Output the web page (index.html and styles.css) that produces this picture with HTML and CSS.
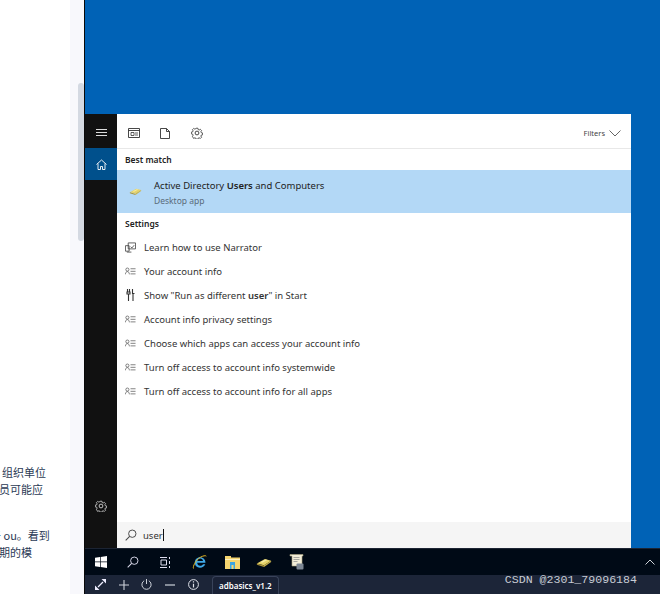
FILE: index.html
```html
<!DOCTYPE html>
<html lang="en">
<head>
<meta charset="utf-8">
<title>Search</title>
<link rel="stylesheet" href="styles.css">
</head>
<body>
<svg class="defs" width="0" height="0" aria-hidden="true">
  <symbol id="acct" viewBox="0 0 12 9">
    <circle cx="2.600" cy="2.400" r="1.700" fill="none" stroke="#555" stroke-width=".8"/>
    <path d="M.4 7.600c.2-2 1-3 2.200-3s2 1 2.200 3M6 1.500h5.500M6 4.300h5.500M6 7.100h5.500" fill="none" stroke="#555" stroke-width=".8"/>
  </symbol>
  <symbol id="gear" viewBox="0 0 12 12">
    <circle cx="6" cy="6" r="1.900" fill="none" stroke="currentColor" stroke-width=".9"/>
    <path d="M5 .7h2l.3 1.500 1.100.5 1.300-.8 1.400 1.400-.8 1.300.5 1.100 1.500.3v2l-1.500.3-.5 1.100.8 1.300-1.400 1.400-1.300-.8-1.100.5-.3 1.100H5l-.3-1.100-1.100-.5-1.300.8L.9 9.700l.8-1.300-.5-1.100L-.3 7V5l1.500-.3.500-1.100-.8-1.300L2.300.9l1.300.8 1.100-.5z" transform="translate(.6 .6) scale(.9)" fill="none" stroke="currentColor" stroke-width=".9"/>
  </symbol>
  <symbol id="book" viewBox="0 0 18 10">
    <path d="M1 6 10 1.200l7 1.800-8 5z" fill="#e6d36a"/>
    <path d="M1 6l8 2.500V10L1 7.500z" fill="#a89236"/>
    <path d="M9 8l8-5v1.300L9 10z" fill="#c9b24a"/>
    <path d="M5 4.500l6-2.800 2 .5-6 3z" fill="#f6eca8"/>
  </symbol>
  <symbol id="lens" viewBox="0 0 14 14">
    <circle cx="8.500" cy="5.500" r="4.300" fill="none" stroke="currentColor" stroke-width="1.100"/>
    <path d="M5.400 8.600.8 13.200" stroke="currentColor" stroke-width="1.200" fill="none"/>
  </symbol>
</svg>

<div class="screen">
  <aside class="doc">
    <div class="doc-page">
      <p class="line first">组织单位</p>
      <p class="line second">员可能应</p>
      <p class="line third">于 ou。看到</p>
      <p class="line fourth">期的模</p>
    </div>
    <div class="doc-gutter"><div class="doc-thumb"></div></div>
  </aside>

  <main class="vm">
    <div class="desktop">
      <section class="start">
        <nav class="rail">
          <div class="rail-btn menu">
            <svg width="11" height="8" viewBox="0 0 11 8"><path d="M0 .5h11M0 3.500h11M0 6.500h11" stroke="#ddd" stroke-width="1"/></svg>
          </div>
          <div class="rail-btn active">
            <svg width="11" height="11" viewBox="0 0 11 11"><path d="M.5 5.500 5.500 1l5 4.500M2 4.500v6h2.500V7.500h2v3H9v-6" fill="none" stroke="#fff" stroke-width=".9"/></svg>
          </div>
          <div class="rail-btn bottom">
            <svg class="rail-gear" width="12" height="12"><use href="#gear"/></svg>
          </div>
        </nav>
        <div class="pane">
          <header class="tabs">
            <svg width="12" height="10" viewBox="0 0 12 10"><path d="M.5.500h11v9H.5zM.5 2.500h11" fill="none" stroke="#333" stroke-width=".9"/><path d="M3 4.500h3v3H3zM7 5h3M7 7h3" fill="none" stroke="#333" stroke-width=".8"/></svg>
            <svg width="10" height="11" viewBox="0 0 10 11"><path d="M.5.500h6l3 3v7h-9zM6.500.500v3h3" fill="none" stroke="#333" stroke-width=".9"/></svg>
            <svg class="tab-gear" width="12" height="12"><use href="#gear"/></svg>
            <div class="filters"><span>Filters</span>
              <svg width="12" height="7" viewBox="0 0 12 7"><path d="M.5.500 6 6 11.500.500" fill="none" stroke="#555" stroke-width=".9"/></svg>
            </div>
          </header>
          <h2 class="heading best">Best match</h2>
          <div class="hit">
            <div class="hit-icon"><svg width="13" height="7"><use href="#book"/></svg></div>
            <div class="hit-text">
              <div class="hit-title">Active Directory <b>Users</b> and Computers</div>
              <div class="hit-sub">Desktop app</div>
            </div>
          </div>
          <h2 class="heading settings">Settings</h2>
          <ul class="list">
            <li class="row">
              <svg class="row-icon" width="12" height="11" viewBox="0 0 12 11"><path d="M3.500.500h8v6.500h-8zM.5 3.500h4v6h-4zM2 10.500h5M6 4.500l1.500 1.500 2.500-3" fill="none" stroke="#444" stroke-width=".9"/></svg>
              <span>Learn how to use Narrator</span></li>
            <li class="row"><svg class="row-icon" width="12" height="9"><use href="#acct"/></svg><span>Your account info</span></li>
            <li class="row">
              <svg class="row-icon" width="10" height="12" viewBox="0 0 10 12"><path d="M2 0v3M4 0v3M1.500 3h3v2h-3zM3 5v7M7 0v4.500h2M7.500 4.500V12" fill="none" stroke="#333" stroke-width="1.100"/></svg>
              <span>Show "Run as different <b>user</b>" in Start</span></li>
            <li class="row"><svg class="row-icon" width="12" height="9"><use href="#acct"/></svg><span>Account info privacy settings</span></li>
            <li class="row"><svg class="row-icon" width="12" height="9"><use href="#acct"/></svg><span>Choose which apps can access your account info</span></li>
            <li class="row"><svg class="row-icon" width="12" height="9"><use href="#acct"/></svg><span>Turn off access to account info systemwide</span></li>
            <li class="row"><svg class="row-icon" width="12" height="9"><use href="#acct"/></svg><span>Turn off access to account info for all apps</span></li>
          </ul>
          <footer class="search">
            <svg class="search-lens" width="12" height="12"><use href="#lens"/></svg>
            <span class="query">user</span><span class="caret"></span>
          </footer>
        </div>
      </section>
    </div>

    <div class="taskbar">
      <svg class="tb-start" width="12" height="12" viewBox="0 0 12 12"><path d="M0 1.700 5 1v4.600H0zM5.700.9 12 0v5.600H5.700zM0 6.300h5V11l-5-.7zM5.700 6.300H12V12l-6.300-.9z" fill="#fff"/></svg>
      <svg class="tb-lens" width="12" height="12"><use href="#lens"/></svg>
      <svg class="tb-view" width="12" height="11" viewBox="0 0 12 11"><path d="M0 .5h7M0 10.500h7M1 3h5.500v5H1zM9.500 0v2M9.500 4v3M9.500 9v2" fill="none" stroke="#dde" stroke-width="1"/></svg>
      <svg class="tb-ie" width="16" height="16" viewBox="0 0 16 16"><path d="M13.500 8.800H5.200c.1 2 1.200 3 2.900 3 1.200 0 2.200-.5 2.900-1.500h2.300c-1 2.200-2.900 3.400-5.300 3.400-3.100 0-5.200-2.100-5.200-5.100 0-3.100 2.200-5.400 5.300-5.400 3.200 0 5.400 2.300 5.400 5.600zM5.300 7h5.700c-.1-1.500-1.200-2.500-2.800-2.500S5.500 5.500 5.300 7z" fill="#3fa9e8"/><path d="M1.500 14.500C.5 13 3.500 6 8.500 3.200c2.500-1.400 5.200-2 5.800-1" fill="none" stroke="#e8b923" stroke-width="1"/></svg>
      <svg class="tb-folder" width="15" height="13" viewBox="0 0 15 13"><path d="M0 0h6v1.500h9V13H0z" fill="#f5d56f"/><path d="M0 3h15v1H0z" fill="#fff2c0"/><path d="M5 6h5v7H8.500V9h-2v4H5z" fill="#3ca5e0"/></svg>
      <svg class="tb-book" width="16" height="9"><use href="#book"/></svg>
      <svg class="tb-script" width="15" height="16" viewBox="0 0 15 16"><path d="M1 .5h13v1.500h-1v10H3V2H1z" fill="#f2edd8" stroke="#a8a282" stroke-width=".6"/><path d="M4.500 3.500h6M4.500 5.500h6M4.500 7.500h4" stroke="#888" stroke-width=".7"/><rect x="7.500" y="9.500" width="7" height="6" rx="1" fill="#7d8794"/></svg>
      <svg class="tb-up" width="10" height="6" viewBox="0 0 10 6"><path d="M.5 5.500 5 1l4.500 4.500" fill="none" stroke="#cfd3d8" stroke-width="1"/></svg>
    </div>

    <div class="toolbar">
      <svg class="tl-expand" width="11" height="11" viewBox="0 0 11 11"><path d="M6.500 0H11v4.500zM0 6.500V11h4.500z" fill="#eef"/><path d="M8 3 3 8" stroke="#eef" stroke-width="1.200"/></svg>
      <svg class="tl-plus" width="10" height="10" viewBox="0 0 10 10"><path d="M5 0v10M0 5h10" stroke="#cdd2da" stroke-width="1.100"/></svg>
      <svg class="tl-power" width="11" height="11" viewBox="0 0 11 11"><path d="M3.200 1.700a4.600 4.600 0 1 0 4.600 0M5.500 0v5" fill="none" stroke="#cdd2da" stroke-width="1"/></svg>
      <svg class="tl-minus" width="10" height="2" viewBox="0 0 10 2"><path d="M0 1h10" stroke="#cdd2da" stroke-width="1.200"/></svg>
      <svg class="tl-info" width="11" height="11" viewBox="0 0 11 11"><circle cx="5.500" cy="5.500" r="4.900" fill="none" stroke="#dfe3ea" stroke-width="1"/><path d="M5.500 2.300v1.300M5.500 4.800v3.600" stroke="#dfe3ea" stroke-width="1.200"/></svg>
      <div class="tab">adbasics_v1.2</div>
      <div class="watermark">CSDN @2301_79096184</div>
    </div>
  </main>
</div>
</body>
</html>
```

FILE: styles.css
```css
* { box-sizing: border-box; }
html, body { margin: 0; padding: 0; height: 100%; }
body { overflow: hidden; background: #fff; font-family: "Noto Sans", "Open Sans", sans-serif; }
.defs { position: absolute; }
.screen { display: flex; width: 660px; height: 594px; }

/* left document sliver */
.doc { width: 85px; display: flex; border-right: 1px solid #0a0a0a; flex: none; }
.doc-page { width: 70px; background: #fff; padding-top: 464px; overflow: hidden; flex: none;
  font-family: "Noto Sans CJK SC", sans-serif; font-size: 11px; color: #2b3a55; }
.line { margin: 0; height: 17px; line-height: 17px; white-space: nowrap; }
.first { padding-left: 2px; }
.second { margin-left: -1px; }
.third { margin-top: 29px; margin-left: -10px; }
.fourth { margin-left: -1px; }
.doc-gutter { width: 14px; background: #f8f8fc; padding: 83px 0 0 8px; flex: none; }
.doc-thumb { width: 6px; height: 158px; background: #d4d9e2; border-radius: 3px; }

/* remote desktop */
.vm { flex: 1; display: flex; flex-direction: column; min-width: 0; }
.desktop { flex: 1; background: #0062b6; padding: 114px 29px 0 0; display: flex; }
.start { flex: 1; display: flex; }
.rail { width: 32px; background: #111; display: flex; flex-direction: column; flex: none; }
.rail-btn { height: 34px; display: flex; align-items: center; justify-content: center; }
.rail-btn.menu { padding-top: 4px; }
.rail-btn.active { height: 32px; background: #00508c; }
.rail-btn.bottom { margin-top: auto; height: 38px; margin-bottom: 23px; }
.rail-gear { color: #d8d8d8; }

.pane { flex: 1; background: #fff; display: flex; flex-direction: column; min-width: 0; color: #222; }
.tabs { height: 35px; border-bottom: 1px solid #e8e8e8; display: flex; align-items: center; gap: 20px; padding: 4px 10px 0 11px; flex: none; }
.tab-gear { color: #333; margin-left: 1px; }
.filters { margin-left: auto; display: flex; align-items: center; gap: 4px; font-size: 7.500px; color: #444; }
.heading { margin: 0; font-size: 8.5px; font-weight: 600; color: #222; line-height: 12px; padding-left: 8px; }
.best { padding-top: 5px; padding-bottom: 5px; height: 21px; }
.settings { padding-top: 5px; height: 22px; }
.hit { height: 43px; background: #b3d8f6; display: flex; align-items: center; padding-left: 8px; flex: none; }
.hit-icon { width: 21px; height: 21px; display: flex; align-items: center; justify-content: center; margin-right: 8px; }
.hit-text { padding-top: 2px; }
.hit-title { font-size: 9.500px; line-height: 16px; color: #222; }
.hit-title b, .row b { font-weight: 600; }
.hit-sub { font-size: 8.500px; line-height: 14px; color: #5a6b7a; }
.list { list-style: none; margin: 0; padding: 0; flex: 1; }
.row { height: 24px; display: flex; align-items: center; font-size: 9.500px; color: #333; padding-left: 8px; white-space: pre; }
.row-icon { flex: none; margin-right: 8px; width: 11px; }
.search { height: 26px; background: #f5f5f5; display: flex; align-items: center; padding-left: 8px; flex: none; font-size: 9.500px; color: #333; }
.search-lens { color: #444; margin-right: 6px; }
.caret { width: 1px; height: 12px; background: #111; }

/* taskbar */
.taskbar { height: 27px; background: #000a16; border-top: 1px solid #1c2433; display: flex; align-items: center; padding-left: 10px; flex: none; color: #dde; }
.tb-lens { margin-left: 20px; }
.tb-view { margin-left: 21px; }
.tb-ie { margin-left: 20px; }
.tb-folder { margin-left: 17px; }
.tb-book { margin-left: 16px; }
.tb-script { margin-left: 17px; }
.tb-up { margin-left: auto; margin-right: 5px; }

.toolbar { height: 19px; background: #1c2538; display: flex; align-items: center; padding-left: 10px; flex: none; }
.tl-plus { margin-left: 13px; }
.tl-power { margin-left: 12px; }
.tl-minus { margin-left: 13px; }
.tl-info { margin-left: 13px; }
.tab { margin-left: 13px; height: 18px; align-self: flex-end; border: 1px solid #39435a; border-bottom: 0; border-radius: 4px 4px 0 0; background: #1a2236; color: #fff; font-size: 8px; font-weight: 600; line-height: 17px; padding: 0 6px; }
.watermark { margin-left: auto; margin-right: 23px; font-family: "Liberation Mono", monospace; font-size: 11.600px; color: #c8ccd4; white-space: nowrap; margin-top: -10px; }
```
